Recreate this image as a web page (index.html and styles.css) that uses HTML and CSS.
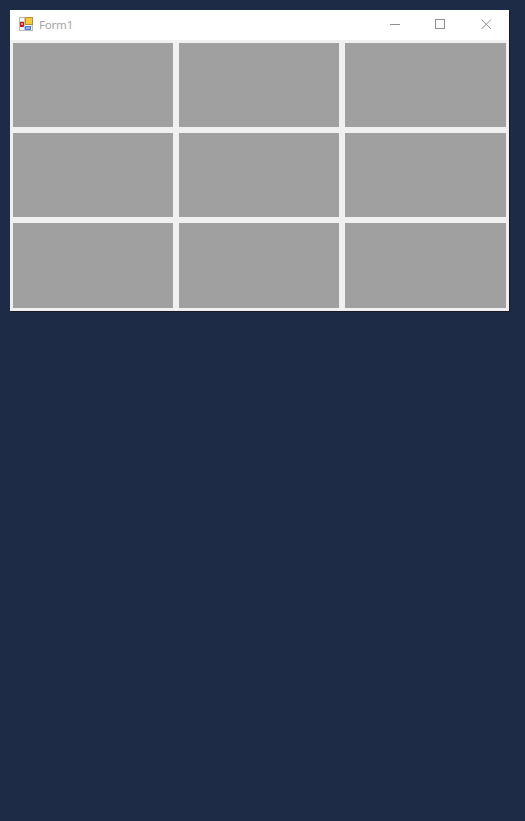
FILE: index.html
```html
<!DOCTYPE html>
<html lang="en">
<head>
<meta charset="utf-8">
<title>Form1</title>
<link rel="stylesheet" href="styles.css">
</head>
<body>
<div class="window">
  <div class="titlebar">
    <svg class="app-icon" width="14" height="14" viewBox="0 0 14 14" aria-hidden="true">
      <rect x="0.5" y="0.5" width="13" height="13" fill="#fff" stroke="#b8b8b8"/>
      <path d="M0 4.5H5M0 9.5H5M5.5 0V14M6 9.5H14" stroke="#c8c8c8" fill="none"/>
      <rect x="1" y="5" width="4" height="5" fill="#c81e1e"/>
      <rect x="2" y="6" width="2" height="2" fill="#ee8a8a"/>
      <rect x="6" y="0" width="8" height="8" fill="#b8902a"/>
      <rect x="7" y="1" width="6" height="6" fill="#fbc93c"/>
      <rect x="6" y="9" width="6" height="4" fill="#4f7fd8"/>
      <rect x="7" y="10" width="4" height="2" fill="#8fb2ee"/>
    </svg>
    <span class="title">Form1</span>
    <div class="controls">
      <span class="control"><svg width="11" height="11" viewBox="0 0 11 11" aria-hidden="true"><path d="M1 5.5H11" stroke="#8f8f8f"/></svg></span>
      <span class="control"><svg width="11" height="11" viewBox="0 0 11 11" aria-hidden="true"><rect x="0.5" y="0.5" width="9" height="9" fill="none" stroke="#8f8f8f"/></svg></span>
      <span class="control"><svg width="11" height="11" viewBox="0 0 11 11" aria-hidden="true"><path d="M0.5 0.5L10 10M10 0.5L0.5 10" stroke="#8f8f8f"/></svg></span>
    </div>
  </div>
  <div class="client">
    <div class="cell"></div><div class="cell"></div><div class="cell"></div>
    <div class="cell"></div><div class="cell"></div><div class="cell"></div>
    <div class="cell"></div><div class="cell"></div><div class="cell"></div>
  </div>
</div>
</body>
</html>
```
FILE: styles.css
```css
html, body {
  margin: 0;
  height: 100%;
  background: #1e2b47;
  overflow: hidden;
}
body {
  padding: 10px 0 0 10px;
  box-sizing: border-box;
}
.window {
  width: 499px;
  height: 301px;
  display: flex;
  flex-direction: column;
  box-shadow: 1px 1px 0 #181b22;
}
.titlebar {
  height: 30px;
  background: #fff;
  display: flex;
  align-items: flex-start;
  padding-left: 9px;
}
.app-icon {
  display: block;
  flex: none;
  margin-top: 7px;
}
.title {
  margin-left: 6px;
  margin-top: 6px;
  font: 11.5px/17px "Noto Sans", "Liberation Sans", sans-serif;
  letter-spacing: -0.2px;
  color: #a4a4a4;
}
.controls {
  margin-left: auto;
  display: flex;
}
.control {
  width: 46px;
  height: 29px;
  display: flex;
  align-items: center;
  justify-content: center;
}
.client {
  flex: 1;
  background: #f0f0f0;
  padding: 3px;
  display: grid;
  grid-template-columns: 160px 160px 161px;
  grid-template-rows: 84px 84px 85px;
  gap: 6px;
}
.cell {
  background: #a0a0a0;
}
```
